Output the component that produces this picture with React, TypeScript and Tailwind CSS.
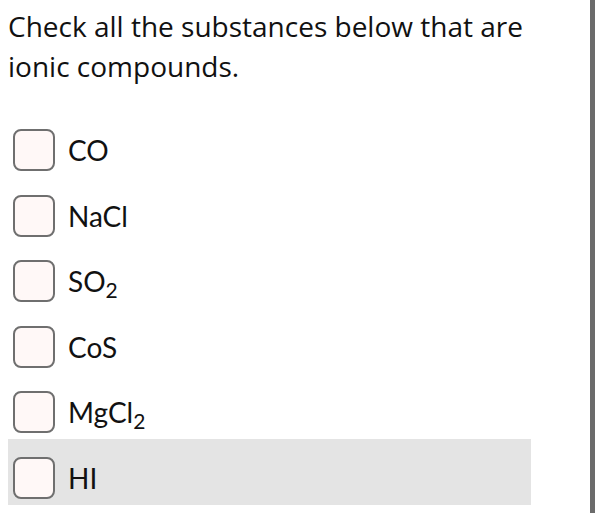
import React from 'react';

interface Option {
  label: React.ReactNode;
  highlighted?: boolean;
}

const Sub: React.FC<{ children: React.ReactNode }> = ({ children }) => (
  <span className="relative top-[8px] text-[21px] leading-none">{children}</span>
);

const options: Option[] = [
  { label: 'CO' },
  { label: 'NaCl' },
  { label: <>SO<Sub>2</Sub></> },
  { label: 'CoS' },
  { label: <>MgCl<Sub>2</Sub></> },
  { label: 'HI', highlighted: true },
];

const App: React.FC = () => {
  return (
    <div className="w-[600px] h-[513px] bg-white flex overflow-hidden">
      <div className="w-[523px] ml-[8px] flex flex-col">
        {/* Question */}
        <p className="mt-[6px] text-[28px] leading-[40px] text-[#111] font-['Open_Sans',sans-serif]">
          Check all the substances below that are
          <br />
          ionic compounds.
        </p>

        {/* Options */}
        <div className="mt-[25px] flex flex-col">
          {options.map((opt, i) => (
            <div
              key={i}
              className={`h-[65.6px] flex items-start pl-[5px] pt-[18px] ${opt.highlighted ? 'bg-[#e4e4e4]' : ''}`}
            >
              <div className="w-[42px] h-[42px] shrink-0 rounded-[8px] border-2 border-[#6f6f6f] bg-[#fff8f7]" />
              <span className="ml-[13px] h-[42px] flex items-center text-[28px] leading-none text-[#111] font-['Lato',sans-serif]">
                {opt.label}
              </span>
            </div>
          ))}
        </div>
      </div>

      {/* Right edge rule */}
      <div className="ml-auto mr-[5px] w-[5px] h-full bg-[#6b6b6b]" />
    </div>
  );
};

export default App;
